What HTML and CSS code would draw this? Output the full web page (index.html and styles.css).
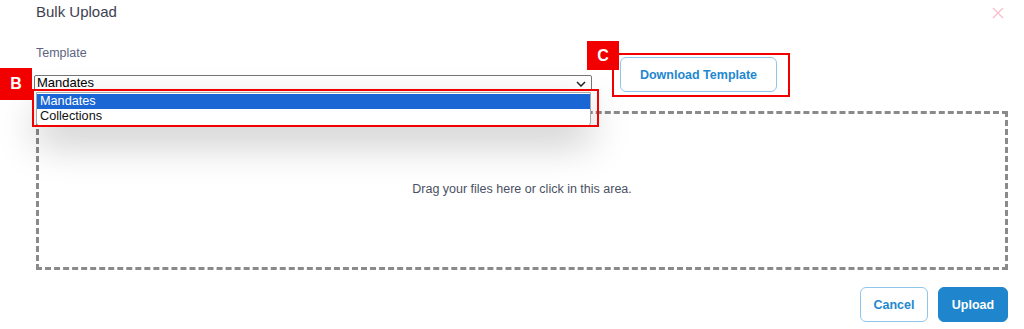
FILE: index.html
```html
<!DOCTYPE html>
<html>
<head>
<meta charset="utf-8">
<link rel="stylesheet" href="styles.css">
</head>
<body>
<div class="modal">
  <div class="header">
    <div class="title">Bulk Upload</div>
    <svg class="close" width="12" height="12" viewBox="0 0 12 12"><path d="M1 1L11 11M11 1L1 11" stroke="#f7bfcd" stroke-width="1.3" fill="none"/></svg>
  </div>
  <div class="top-row">
    <div class="field">
      <div class="label">Template</div>
      <div class="select">
        <span>Mandates</span>
        <svg width="10" height="6" viewBox="0 0 10 6"><path d="M1 1L5 5L9 1" stroke="#222" stroke-width="1.5" fill="none"/></svg>
      </div>
      <div class="options">
        <div class="option selected">Mandates</div>
        <div class="option">Collections</div>
      </div>
    </div>
    <button class="btn-outline download">Download Template</button>
  </div>
  <div class="dropzone">Drag your files here or click in this area.</div>
  <div class="footer">
    <button class="btn-outline cancel">Cancel</button>
    <button class="btn-primary">Upload</button>
  </div>

  <div class="anno-box anno-b"></div>
  <div class="badge badge-b">B</div>
  <div class="anno-box anno-c"></div>
  <div class="badge badge-c">C</div>
</div>
</body>
</html>
```
FILE: styles.css
```css
* { box-sizing: border-box; }
html, body { margin: 0; padding: 0; background: #fff; }
body { font-family: "Liberation Sans", Arial, sans-serif; width: 1024px; height: 329px; overflow: hidden; }
.modal { position: relative; width: 1024px; height: 329px; padding: 0 16px 0 34px; }
.header { height: 24px; display: flex; justify-content: space-between; align-items: center; padding-left: 2px; }
.title { font-size: 15px; color: #3d4150; line-height: 24px; }
.close { margin-right: 4px; margin-top: 1px; }
.top-row { display: flex; align-items: flex-start; margin-top: 21px; }
.field { position: relative; width: 558px; }
.label { font-size: 12.5px; line-height: 16px; color: #5d6480; padding-left: 2px; height: 16px; }
.select { margin-top: 14px; height: 16px; border: 1px solid #767676; border-radius: 2px; display: flex; align-items: center; justify-content: space-between; padding: 0 5px 0 2px; font-size: 13px; color: #000; line-height: 14px; }
.select svg { margin-top: 1px; }
.options { position: absolute; left: 2px; top: 47px; width: 555px; border: 1px solid #a8a8a8; border-radius: 0 0 5px 5px; background: #fff; padding: 1px 0 2px; box-shadow: 0 16px 40px rgba(0,0,0,0.22); z-index: 2; }
.option { font-size: 12.7px; line-height: 15px; height: 15px; padding-left: 3px; color: #111; }
.option.selected { background: #1a66d4; color: #fff; }
.btn-outline { font-family: "Liberation Sans", Arial, sans-serif; font-weight: bold; font-size: 12.5px; color: #1f88cf; background: #fff; border: 1px solid #90c6ec; border-radius: 6px; cursor: pointer; }
.download { margin-left: 28px; margin-top: 12px; width: 157px; height: 35px; }
.dropzone { margin-top: 19px; margin-left: 2px; height: 159px; border: 3px dashed #8a8a8a; display: flex; align-items: center; justify-content: center; font-size: 12.5px; color: #4a5064; padding-bottom: 4px; }
.footer { display: flex; justify-content: flex-end; gap: 10px; margin-top: 17px; }
.cancel { width: 68px; height: 35px; }
.btn-primary { width: 70px; height: 35px; font-family: "Liberation Sans", Arial, sans-serif; font-weight: bold; font-size: 12.5px; color: #fff; background: #1f85cc; border: 1px solid #1f85cc; border-radius: 6px; }
.anno-box { position: absolute; border: 2px solid #f20000; z-index: 3; }
.anno-b { left: 32px; top: 89px; width: 567px; height: 38px; }
.anno-c { left: 612px; top: 53px; width: 178px; height: 44px; }
.badge { position: absolute; background: #f20000; color: #fff; font-weight: bold; font-size: 16px; display: flex; align-items: center; justify-content: center; z-index: 4; }
.badge-b { left: 0; top: 68px; width: 32px; height: 32px; }
.badge-c { left: 587px; top: 41px; width: 32px; height: 29px; }
```
